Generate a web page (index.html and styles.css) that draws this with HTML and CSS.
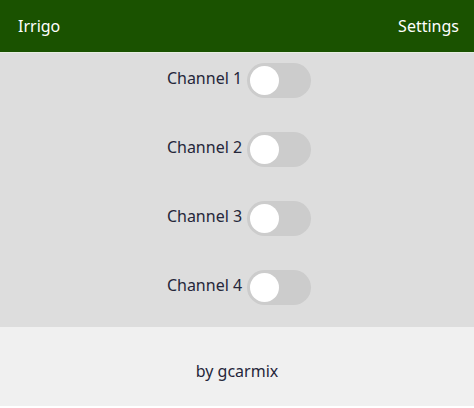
FILE: index.html
```html
<!DOCTYPE html>
<html lang="en">
<head>
    <meta charset="UTF-8">
    <meta name="viewport" content="width=device-width, initial-scale=1.0">
    <title>Irrigo</title>
    <link rel="stylesheet" href="styles.css">
</head>
<body>
    <div class="navbar">
        <span class="brand">Irrigo</span>
        <span class="nav-link">Settings</span>
    </div>
    <div class="channels">
        <div class="channel-row">
            <label for="ch1">Channel 1</label>
            <input type="checkbox" id="ch1" class="switch">
        </div>
        <div class="channel-row">
            <label for="ch2">Channel 2</label>
            <input type="checkbox" id="ch2" class="switch">
        </div>
        <div class="channel-row">
            <label for="ch3">Channel 3</label>
            <input type="checkbox" id="ch3" class="switch">
        </div>
        <div class="channel-row">
            <label for="ch4">Channel 4</label>
            <input type="checkbox" id="ch4" class="switch">
        </div>
    </div>
    <div class="footer">by gcarmix</div>
</body>
</html>
```

FILE: styles.css
```css
body {
    margin: 0;
    height: 100vh;
    background-color: #ffffff;
    color: #25263a;
    font-family: 'Noto Sans', 'Open Sans', sans-serif;
    font-size: 16px;
}
.navbar {
    display: flex;
    justify-content: space-between;
    align-items: center;
    height: 52px;
    padding: 0 15px 0 18px;
    background-color: #1a5200;
    color: #ffffff;
    font-size: 16px;
    border-bottom: 1px solid #e6eee2;
}
.channels {
    display: flex;
    flex-direction: column;
    align-items: center;
    gap: 34px;
    padding: 10px 0 22px;
    background-color: #dddddd;
}
.channel-row {
    display: flex;
    align-items: center;
    gap: 5px;
    padding-left: 4px;
}
.channel-row label {
    line-height: 30px;
    padding-bottom: 5px;
}
.switch {
    appearance: none;
    -webkit-appearance: none;
    position: relative;
    width: 64px;
    height: 35px;
    margin: 0;
    border-radius: 18px;
    background-color: #cccccc;
    cursor: pointer;
}
.switch::before {
    content: '';
    position: absolute;
    left: 3px;
    top: 3px;
    width: 29px;
    height: 29px;
    border-radius: 50%;
    background-color: #ffffff;
    transition: left 0.3s;
}
.switch:checked {
    background-color: #1a5200;
}
.switch:checked::before {
    left: 32px;
}
.footer {
    height: 79px;
    box-sizing: border-box;
    padding-top: 8px;
    display: flex;
    align-items: center;
    justify-content: center;
    background-color: #f0f0f0;
}
```
